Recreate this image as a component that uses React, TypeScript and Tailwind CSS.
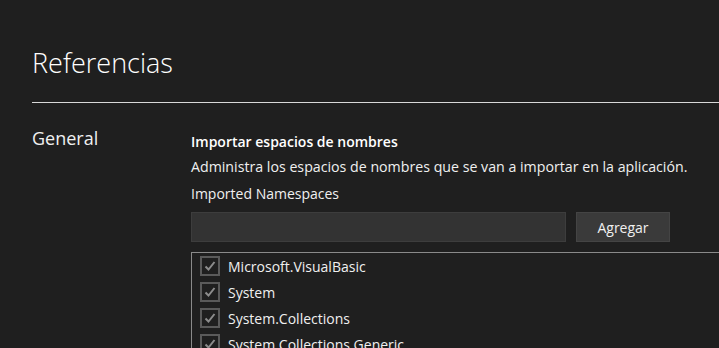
import React from "react";

const items = [
  "Microsoft.VisualBasic",
  "System",
  "System.Collections",
  "System.Collections.Generic",
];

function CheckRow({ label }: { label: string }) {
  return (
    <div className="flex items-center h-[26px]">
      <div className="w-[20px] h-[20px] border-2 border-[#5a5a5a] flex items-center justify-center mr-[8px] shrink-0">
        <svg width="14" height="14" viewBox="0 0 14 14">
          <path d="M2.5 7.5 L5.5 10.5 L11.5 3" fill="none" stroke="#8c8c8c" strokeWidth="2" />
        </svg>
      </div>
      <span className="text-[14px] text-[#f0f0f0] whitespace-nowrap">{label}</span>
    </div>
  );
}

export default function App() {
  return (
    <div
      className="min-h-screen w-[719px] h-[348px] overflow-hidden bg-[#1f1f1f] text-white"
      style={{ fontFamily: '"Open Sans", "Noto Sans", sans-serif' }}
    >
      <div className="pl-[32px] pt-[43px]">
        <h1 className="text-[27px] font-light leading-[40px] text-white">Referencias</h1>
        <div className="mt-[19px] h-px bg-[#d8d8d8]" />
        <div className="flex mt-[22px]">
          <div className="w-[159px] shrink-0 text-[18px] leading-[26px] text-[#f0f0f0]">General</div>
          <div className="flex flex-col">
            <div className="text-[14px] font-semibold leading-[20px] mt-[7px]">Importar espacios de nombres</div>
            <div className="text-[14.2px] leading-[20px] mt-[5px] text-[#f0f0f0] whitespace-nowrap">
              Administra los espacios de nombres que se van a importar en la aplicación.
            </div>
            <div className="text-[14px] leading-[20px] mt-[7px] text-[#f0f0f0]">Imported Namespaces</div>
            <div className="flex mt-[8px] gap-[10px]">
              <div className="w-[375px] h-[30px] bg-[#333333] border border-[#3d3d3d]" />
              <button className="w-[94px] h-[30px] bg-[#3a3a3a] border border-[#444444] text-[14px] text-[#f0f0f0]">
                Agregar
              </button>
            </div>
            <div className="mt-[10px] w-[560px] h-[120px] border border-[#8a8a8a] pt-0 pl-[8px]">
              {items.map((it) => (
                <CheckRow key={it} label={it} />
              ))}
            </div>
          </div>
        </div>
      </div>
    </div>
  );
}
